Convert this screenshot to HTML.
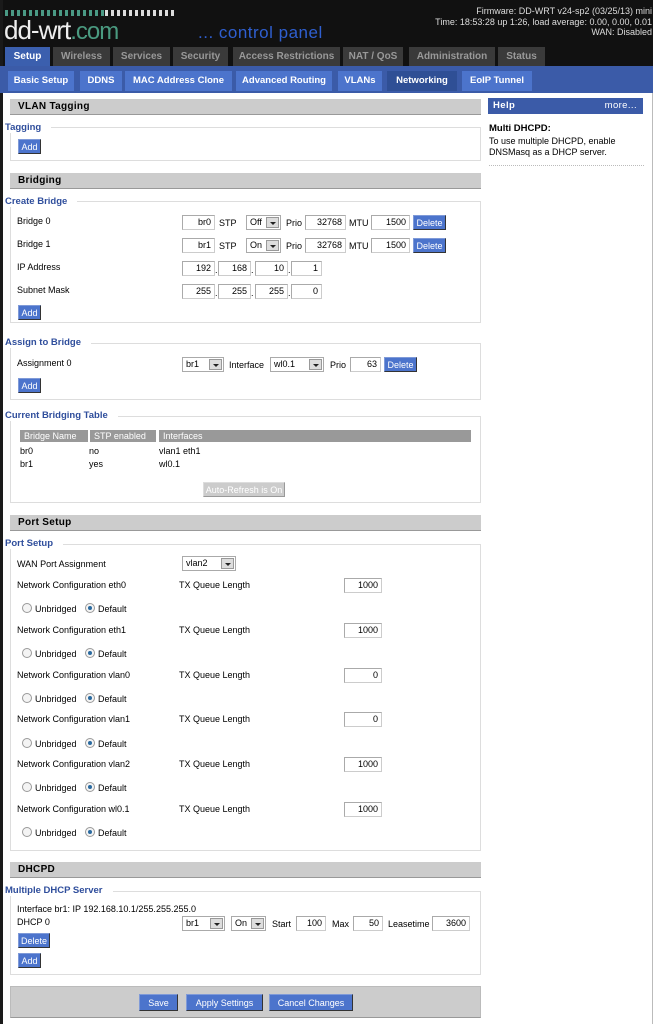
<!DOCTYPE html>
<html><head><meta charset="utf-8"><style>
*{box-sizing:border-box;margin:0;padding:0}
body{width:653px;height:1024px;position:relative;background:#fff;font-family:"Liberation Sans",sans-serif;font-size:9px;color:#000;overflow:hidden}
div,span{position:absolute;white-space:nowrap}
.hdr{background:#111;left:0;top:0;width:653px;height:66px}
.tab{top:47px;height:19px;background:#3a3a3a;color:#999;font-weight:bold;font-size:10px;text-align:center;line-height:19px}
.tab.on{background:#3b5fae;color:#fff}
.band{left:0;top:66px;width:653px;height:27px;background:#3b5ba8}
.st{top:71px;height:20px;background:#4c74cc;color:#fff;font-weight:bold;font-size:9.5px;text-align:center;line-height:20px}
.st.on{background:#2f4f95}
.sec{left:10px;width:471px;height:16px;background:#ccc;border-bottom:1px solid #999;font-weight:bold;font-size:10px;padding-left:8px;line-height:15px;letter-spacing:.3px}
.fs{left:10px;width:471px;border:1px solid #ddd;border-top:1px solid #ddd}
.lg{left:5px;color:#2f4e9c;font-weight:bold;font-size:9.5px;background:#fff;padding-right:10px}
.in{height:15px;border:1px solid #aaa;border-right-color:#ccc;border-bottom-color:#ccc;background:#fff;text-align:right;padding-right:3px;line-height:13px;font-size:9px}
.sel{height:15px;border:1px solid #aaa;background:#fff;font-size:9px;line-height:13px;padding-left:3px}
.sel i{position:absolute;right:1px;top:1px;width:13px;height:11px;background:#ddd;border:1px solid #999}
.sel i:after{content:"";position:absolute;left:3px;top:4px;border:3px solid transparent;border-top:3px solid #222}
.btn{height:15px;background:#4c74cc;color:#fff;font-size:9px;line-height:14px;text-align:center;border:1px solid #7f9ad8;border-right-color:#333;border-bottom-color:#333}
.rad{width:10px;height:10px;border-radius:50%;border:1px solid #999;background:#f4f4f4}
.rad.c:after{content:"";position:absolute;left:2px;top:2px;width:4px;height:4px;border-radius:50%;background:#2a6aa0}
</style></head><body>
<div class="hdr"></div>
<div style="left:0;top:0;width:3px;height:1024px;background:#1a1a1a"></div>
<div style="left:652px;top:93px;width:1px;height:931px;background:#bbb"></div>
<!-- logo bars -->
<div style="left:5px;top:10px;width:170px;height:6px;background:repeating-linear-gradient(90deg,#4a9a85 0 3px,transparent 3px 6px)"></div>
<div style="left:105px;top:10px;width:70px;height:6px;background:repeating-linear-gradient(90deg,#ddd 0 3px,#111 3px 6px)"></div>
<div style="left:4px;top:15px;font-size:26px;line-height:30px;color:#eee;letter-spacing:-1px;font-weight:300">dd-wrt<span style="position:static;color:#4a9a80;font-size:24px">.com</span></div>
<div style="left:198px;top:23px;font-size:17px;color:#2f5fd0;letter-spacing:.5px">... control panel</div>
<div style="right:1px;top:6px;color:#ddd;font-size:9px;text-align:right;line-height:10.5px">Firmware: DD-WRT v24-sp2 (03/25/13) mini<br>Time: 18:53:28 up 1:26, load average: 0.00, 0.00, 0.01<br>WAN: Disabled</div>
<div class="tab on" style="left:5px;width:45px">Setup</div>
<div class="tab" style="left:53px;width:57px">Wireless</div>
<div class="tab" style="left:113px;width:57px">Services</div>
<div class="tab" style="left:173px;width:55px">Security</div>
<div class="tab" style="left:233px;width:107px">Access Restrictions</div>
<div class="tab" style="left:343px;width:60px">NAT / QoS</div>
<div class="tab" style="left:409px;width:86px">Administration</div>
<div class="tab" style="left:498px;width:47px">Status</div>
<div class="band"></div>
<div class="st" style="left:8px;width:66px">Basic Setup</div>
<div class="st" style="left:80px;width:42px">DDNS</div>
<div class="st" style="left:125px;width:107px">MAC Address Clone</div>
<div class="st" style="left:236px;width:96px">Advanced Routing</div>
<div class="st" style="left:338px;width:44px">VLANs</div>
<div class="st on" style="left:387px;width:70px">Networking</div>
<div class="st" style="left:462px;width:70px">EoIP Tunnel</div>

<!-- help -->
<div style="left:488px;top:98px;width:155px;height:16px;background:#3b5ba8;color:#fff;font-weight:bold;font-size:9.5px;line-height:16px;padding-left:5px;letter-spacing:.4px">Help<span style="right:6px;top:0;font-weight:normal">more...</span></div>
<div style="left:489px;top:123px;font-weight:bold;font-size:9.5px">Multi DHCPD:</div>
<div style="left:489px;top:136px;line-height:11px">To use multiple DHCPD, enable<br>DNSMasq as a DHCP server.</div>
<div style="left:489px;top:165px;width:155px;border-top:1px dotted #bbb"></div>

<!-- VLAN -->
<div class="sec" style="top:99px">VLAN Tagging</div>
<div class="fs" style="top:127px;height:34px"></div>
<div class="lg" style="top:122px">Tagging</div>
<div class="btn" style="left:18px;top:139px;width:23px">Add</div>

<div class="sec" style="top:173px">Bridging</div>
<div class="fs" style="top:201px;height:122px"></div>
<div class="lg" style="top:196px">Create Bridge</div>
<div style="left:17px;top:216px">Bridge 0</div>
<div class="in" style="left:182px;top:215px;width:33px">br0</div>
<div style="left:219px;top:218px">STP</div>
<div class="sel" style="left:246px;top:215px;width:35px">Off<i></i></div>
<div style="left:286px;top:218px">Prio</div>
<div class="in" style="left:305px;top:215px;width:41px">32768</div>
<div style="left:349px;top:218px">MTU</div>
<div class="in" style="left:371px;top:215px;width:39px">1500</div>
<div class="btn" style="left:413px;top:215px;width:33px">Delete</div>
<div style="left:17px;top:239px">Bridge 1</div>
<div class="in" style="left:182px;top:238px;width:33px">br1</div>
<div style="left:219px;top:241px">STP</div>
<div class="sel" style="left:246px;top:238px;width:35px">On<i></i></div>
<div style="left:286px;top:241px">Prio</div>
<div class="in" style="left:305px;top:238px;width:41px">32768</div>
<div style="left:349px;top:241px">MTU</div>
<div class="in" style="left:371px;top:238px;width:39px">1500</div>
<div class="btn" style="left:413px;top:238px;width:33px">Delete</div>
<div style="left:17px;top:262px">IP Address</div>
<div class="in" style="left:182px;top:261px;width:33px">192</div><div style="left:215px;top:265px">.</div>
<div class="in" style="left:218px;top:261px;width:33px">168</div><div style="left:251px;top:265px">.</div>
<div class="in" style="left:255px;top:261px;width:33px">10</div><div style="left:288px;top:265px">.</div>
<div class="in" style="left:291px;top:261px;width:31px">1</div>
<div style="left:17px;top:285px">Subnet Mask</div>
<div class="in" style="left:182px;top:284px;width:33px">255</div><div style="left:215px;top:288px">.</div>
<div class="in" style="left:218px;top:284px;width:33px">255</div><div style="left:251px;top:288px">.</div>
<div class="in" style="left:255px;top:284px;width:33px">255</div><div style="left:288px;top:288px">.</div>
<div class="in" style="left:291px;top:284px;width:31px">0</div>
<div class="btn" style="left:18px;top:305px;width:23px">Add</div>

<div class="fs" style="top:343px;height:57px"></div>
<div class="lg" style="top:337px">Assign to Bridge</div>
<div style="left:17px;top:358px">Assignment 0</div>
<div class="sel" style="left:182px;top:357px;width:42px">br1<i></i></div>
<div style="left:229px;top:360px">Interface</div>
<div class="sel" style="left:270px;top:357px;width:54px">wl0.1<i></i></div>
<div style="left:330px;top:360px">Prio</div>
<div class="in" style="left:350px;top:357px;width:31px">63</div>
<div class="btn" style="left:384px;top:357px;width:33px">Delete</div>
<div class="btn" style="left:18px;top:378px;width:23px">Add</div>

<div class="fs" style="top:416px;height:87px"></div>
<div class="lg" style="top:410px">Current Bridging Table</div>
<div style="left:20px;top:430px;width:68px;height:12px;background:#999;color:#fff;padding-left:4px;line-height:12px">Bridge Name</div>
<div style="left:90px;top:430px;width:66px;height:12px;background:#999;color:#fff;padding-left:4px;line-height:12px">STP enabled</div>
<div style="left:159px;top:430px;width:312px;height:12px;background:#999;color:#fff;padding-left:4px;line-height:12px">Interfaces</div>
<div style="left:20px;top:446px">br0</div><div style="left:89px;top:446px">no</div><div style="left:159px;top:446px">vlan1 eth1</div>
<div style="left:20px;top:459px">br1</div><div style="left:89px;top:459px">yes</div><div style="left:159px;top:459px">wl0.1</div>
<div style="left:203px;top:482px;width:82px;height:15px;background:#ccc;color:#fff;text-align:center;line-height:15px;border:1px solid #ddd;border-right-color:#999;border-bottom-color:#999">Auto-Refresh is On</div>

<div class="sec" style="top:515px">Port Setup</div>
<div class="fs" style="top:544px;height:307px"></div>
<div class="lg" style="top:538px">Port Setup</div>
<div style="left:17px;top:559px">WAN Port Assignment</div>
<div class="sel" style="left:182px;top:556px;width:54px">vlan2<i></i></div>

<div style="left:17px;top:580px">Network Configuration eth0</div><div style="left:179px;top:580px">TX Queue Length</div><div class="in" style="left:344px;top:578px;width:38px">1000</div>
<div class="rad" style="left:22px;top:603px"></div><div style="left:35px;top:604px">Unbridged</div><div class="rad c" style="left:85px;top:603px"></div><div style="left:98px;top:604px">Default</div>
<div style="left:17px;top:625px">Network Configuration eth1</div><div style="left:179px;top:625px">TX Queue Length</div><div class="in" style="left:344px;top:623px;width:38px">1000</div>
<div class="rad" style="left:22px;top:648px"></div><div style="left:35px;top:649px">Unbridged</div><div class="rad c" style="left:85px;top:648px"></div><div style="left:98px;top:649px">Default</div>
<div style="left:17px;top:670px">Network Configuration vlan0</div><div style="left:179px;top:670px">TX Queue Length</div><div class="in" style="left:344px;top:668px;width:38px">0</div>
<div class="rad" style="left:22px;top:693px"></div><div style="left:35px;top:694px">Unbridged</div><div class="rad c" style="left:85px;top:693px"></div><div style="left:98px;top:694px">Default</div>
<div style="left:17px;top:714px">Network Configuration vlan1</div><div style="left:179px;top:714px">TX Queue Length</div><div class="in" style="left:344px;top:712px;width:38px">0</div>
<div class="rad" style="left:22px;top:738px"></div><div style="left:35px;top:739px">Unbridged</div><div class="rad c" style="left:85px;top:738px"></div><div style="left:98px;top:739px">Default</div>
<div style="left:17px;top:759px">Network Configuration vlan2</div><div style="left:179px;top:759px">TX Queue Length</div><div class="in" style="left:344px;top:757px;width:38px">1000</div>
<div class="rad" style="left:22px;top:782px"></div><div style="left:35px;top:783px">Unbridged</div><div class="rad c" style="left:85px;top:782px"></div><div style="left:98px;top:783px">Default</div>
<div style="left:17px;top:804px">Network Configuration wl0.1</div><div style="left:179px;top:804px">TX Queue Length</div><div class="in" style="left:344px;top:802px;width:38px">1000</div>
<div class="rad" style="left:22px;top:827px"></div><div style="left:35px;top:828px">Unbridged</div><div class="rad c" style="left:85px;top:827px"></div><div style="left:98px;top:828px">Default</div>

<div class="sec" style="top:862px">DHCPD</div>
<div class="fs" style="top:891px;height:84px"></div>
<div class="lg" style="top:885px">Multiple DHCP Server</div>
<div style="left:17px;top:904px">Interface br1: IP 192.168.10.1/255.255.255.0</div>
<div style="left:17px;top:917px">DHCP 0</div>
<div class="sel" style="left:182px;top:916px;width:43px">br1<i></i></div>
<div class="sel" style="left:231px;top:916px;width:35px">On<i></i></div>
<div style="left:272px;top:919px">Start</div>
<div class="in" style="left:296px;top:916px;width:30px">100</div>
<div style="left:332px;top:919px">Max</div>
<div class="in" style="left:353px;top:916px;width:30px">50</div>
<div style="left:388px;top:919px">Leasetime</div>
<div class="in" style="left:432px;top:916px;width:38px">3600</div>
<div class="btn" style="left:18px;top:933px;width:32px">Delete</div>
<div class="btn" style="left:18px;top:953px;width:23px">Add</div>

<div style="left:10px;top:986px;width:471px;height:32px;background:#ccc;border:1px solid #bbb;border-bottom-color:#999"></div>
<div class="btn" style="left:139px;top:994px;width:39px;height:17px;line-height:16px">Save</div>
<div class="btn" style="left:186px;top:994px;width:77px;height:17px;line-height:16px">Apply Settings</div>
<div class="btn" style="left:269px;top:994px;width:84px;height:17px;line-height:16px">Cancel Changes</div>
</body></html>
